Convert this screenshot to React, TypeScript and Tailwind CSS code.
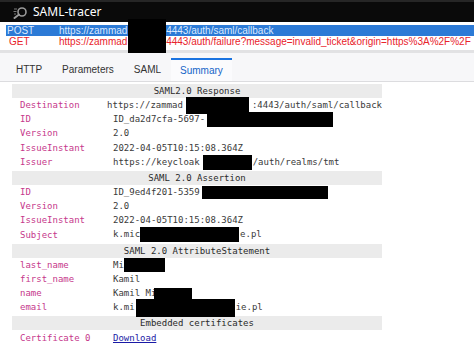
import React from 'react'

type Row =
  | { kind: 'head'; text: string }
  | { kind: 'data'; label: string; value: React.ReactNode }

// black redaction block sitting inline in a value
function Hide({ w, h = 15, ml = 0, mr = 0 }: { w: number; h?: number; ml?: number; mr?: number }) {
  return (
    <span
      className="inline-block bg-black align-middle"
      style={{ width: w, height: h, marginLeft: ml, marginRight: mr, marginTop: -(h - 12) / 2, marginBottom: -(h - 12) / 2 }}
    />
  )
}

const rows: Row[] = [
  { kind: 'head', text: 'SAML2.0 Response' },
  {
    kind: 'data',
    label: 'Destination',
    value: (
      <>
        https://zammad
        <Hide w={63} h={17} ml={3} mr={3} />
        :4443/auth/saml/callback
      </>
    ),
  },
  {
    kind: 'data',
    label: 'ID',
    value: (
      <>
        ID_da2d7cfa-5697-
        <Hide w={126} ml={2} />
      </>
    ),
  },
  { kind: 'data', label: 'Version', value: '2.0' },
  { kind: 'data', label: 'IssueInstant', value: '2022-04-05T10:15:08.364Z' },
  {
    kind: 'data',
    label: 'Issuer',
    value: (
      <>
        https://keycloak
        <Hide w={49} ml={3} mr={1} />
        /auth/realms/tmt
      </>
    ),
  },
  { kind: 'head', text: 'SAML 2.0 Assertion' },
  {
    kind: 'data',
    label: 'ID',
    value: (
      <>
        ID_9ed4f201-5359
        <Hide w={126} h={13} ml={2} />
      </>
    ),
  },
  { kind: 'data', label: 'Version', value: '2.0' },
  { kind: 'data', label: 'IssueInstant', value: '2022-04-05T10:15:08.364Z' },
  {
    kind: 'data',
    label: 'Subject',
    value: (
      <>
        k.mic
        <Hide w={99} h={15} ml={0} mr={1} />
        e.pl
      </>
    ),
  },
  { kind: 'head', text: 'SAML 2.0 AttributeStatement' },
  {
    kind: 'data',
    label: 'last_name',
    value: (
      <>
        Mi
        <Hide w={41} h={14} ml={0} />
      </>
    ),
  },
  { kind: 'data', label: 'first_name', value: 'Kamil' },
  {
    kind: 'data',
    label: 'name',
    value: (
      <>
        Kamil Mi
        <Hide w={38} h={11} ml={-2} />
      </>
    ),
  },
  {
    kind: 'data',
    label: 'email',
    value: (
      <>
        k.mi
        <Hide w={99} h={18} ml={1} mr={1} />
        ie.pl
      </>
    ),
  },
  { kind: 'head', text: 'Embedded certificates' },
  {
    kind: 'data',
    label: 'Certificate 0',
    value: <span className="text-[#1a1aa6] underline">Download</span>,
  },
]

function TracerIcon() {
  return (
    <svg width="15" height="13" viewBox="0 0 15 13" className="shrink-0">
      <circle cx="9" cy="6" r="4" fill="none" stroke="#9a9a9a" strokeWidth="1.6" />
      <path d="M6 8.5 L1.5 12" stroke="#9a9a9a" strokeWidth="2" strokeLinecap="round" />
      <path d="M1 3 L4 3 M0.5 5.5 L3.5 5.5 M1 8 L3 8" stroke="#7a7a7a" strokeWidth="1" />
    </svg>
  )
}

const tabs = ['HTTP', 'Parameters', 'SAML', 'Summary']

export default function App() {
  return (
    <div className="relative w-[474px] h-[345px] overflow-hidden bg-white font-['Liberation_Sans',Arial,sans-serif]">
      {/* title bar */}
      <div className="h-[22px] bg-[#0a0a0a] border-t-2 border-[#262626] flex items-center gap-[5px] pl-[13px]">
        <TracerIcon />
        <span className="text-white text-[12px] leading-none font-['Noto_Sans',sans-serif]">SAML-tracer</span>
      </div>

      {/* request list */}
      <div className="mt-[3px] text-[10px] leading-[11px]">
        <div className="h-[11px] bg-[#2c7ad6] flex ml-[6px] text-[#dbe9ff] whitespace-nowrap">
          <span className="w-[53px] pl-[1px]">POST</span>
          <span className="relative">
            https://zammad
            <span className="inline-block w-[36px]" />
            :4443/auth/saml/callback
            <span className="absolute left-[69px] top-[-6px] w-[38px] h-[34px] bg-black" />
          </span>
        </div>
        <div className="h-[11px] flex ml-[6px] text-[#e8232b] whitespace-nowrap">
          <span className="w-[53px] pl-[3px]">GET</span>
          <span>
            https://zammad
            <span className="inline-block w-[36px]" />
            :4443/auth/failure?message=invalid_ticket&amp;origin=https%3A%2F%2F
          </span>
        </div>
      </div>

      <div className="mt-[3px] h-[3px] bg-[#e2e2e4]" />

      {/* tabs */}
      <div className="h-[29px] bg-[#f7f7f9] border-b border-[#dcdcdf] flex items-end pl-[6px] text-[10px]">
        {tabs.map((t) => {
          const active = t === 'Summary'
          return (
            <div
              key={t}
              className={
                active
                  ? 'h-[23px] px-[9px] flex items-center border-t-2 border-[#1a73e0] bg-[#fbfbfd] text-[#1565c8]'
                  : 'h-[23px] px-[10px] flex items-center text-[#333]'
              }
            >
              {t}
            </div>
          )
        })}
      </div>

      {/* summary table */}
      <div className="ml-[12px] w-[370px] font-['DejaVu_Sans_Mono',monospace] text-[9px] leading-[12px]">
        {rows.map((r, i) =>
          r.kind === 'head' ? (
            <div key={i} className="mt-[2px] h-[14px] bg-[#ebebeb] flex items-center justify-center text-[#2a2a2a]">
              {r.text}
            </div>
          ) : (
            <div key={i} className="h-[14.2px] flex items-center whitespace-nowrap">
              <span className="w-[101px] pl-[8px] text-[#c6378b]">{r.label}</span>
              <span className="text-[#3a3a3a]">{r.value}</span>
            </div>
          )
        )}
      </div>
    </div>
  )
}
